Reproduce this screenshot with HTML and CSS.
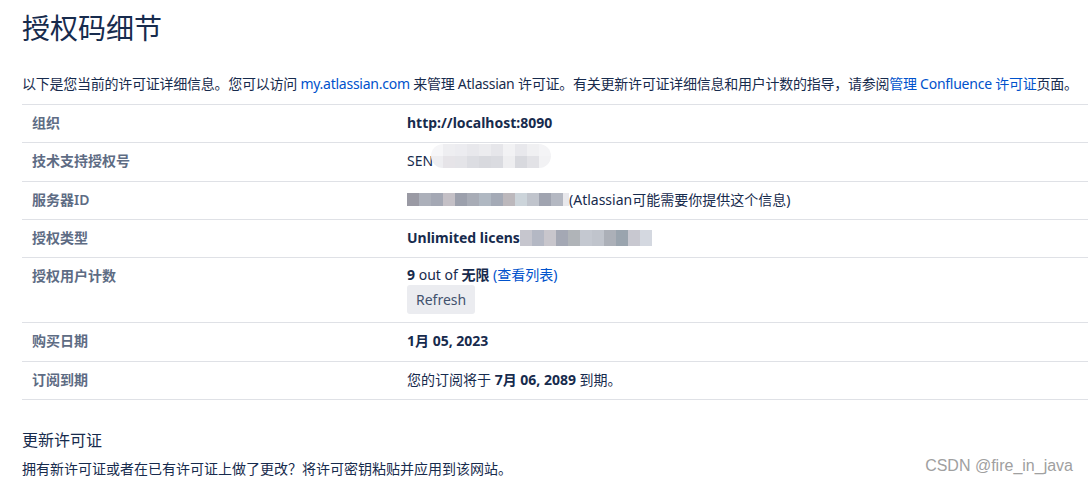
FILE: index.html
```html
<!DOCTYPE html>
<html lang="zh-CN">
<head>
<meta charset="utf-8">
<title>授权码细节</title>
<link rel="stylesheet" href="styles.css">
</head>
<body>
<div class="page">
  <h1 class="title">授权码细节</h1>
  <p class="intro">以下是您当前的许可证详细信息。您可以访问 <a href="#">my.atlassian.com</a> 来管理 Atlassian 许可证。有关更新许可证详细信息和用户计数的指导，请参阅<a href="#">管理 Confluence 许可证</a>页面。</p>
  <table class="details">
    <tr><th>组织</th><td><strong>http://localhost:8090</strong></td></tr>
    <tr class="loose"><th>技术支持授权号</th><td><span class="sen">SEN</span><span class="pill"><i></i><i></i><i></i><i></i><i></i><i></i><i></i><i></i><i></i><i></i><i></i><i></i><i></i><i></i><i></i><i></i><i></i><i></i><i></i><i></i></span></td></tr>
    <tr><th>服务器ID</th><td><span class="blocks sid"><i></i><i></i><i></i><i></i><i></i><i></i><i></i><i></i><i></i><i></i><i></i><i></i><i></i><i></i></span>(Atlassian可能需要你提供这个信息)</td></tr>
    <tr><th>授权类型</th><td><strong>Unlimited licens</strong><span class="blocks lic"><i></i><i></i><i></i><i></i><i></i><i></i><i></i><i></i><i></i><i></i><i></i></span></td></tr>
    <tr class="tall"><th>授权用户计数</th><td><div><strong>9</strong> out of <strong>无限</strong> <a href="#">(查看列表)</a></div><button class="btn" type="button">Refresh</button></td></tr>
    <tr class="loose"><th>购买日期</th><td><strong>1月 05, 2023</strong></td></tr>
    <tr><th>订阅到期</th><td>您的订阅将于 <strong>7月 06, 2089</strong> 到期。</td></tr>
  </table>
  <h2 class="sub">更新许可证</h2>
  <p class="note">拥有新许可证或者在已有许可证上做了更改？将许可密钥粘贴并应用到该网站。</p>
</div>
<div class="watermark">CSDN @fire_in_java</div>
</body>
</html>
```
FILE: styles.css
```css
html, body {
  margin: 0;
  padding: 0;
  background: #fff;
}
body {
  font-family: "Segoe UI", "Noto Sans", "Noto Sans CJK SC", sans-serif;
  font-size: 14px;
  line-height: 20px;
  color: #172b4d;
  overflow: hidden;
  width: 1088px;
  height: 485px;
  position: relative;
}
.page {
  padding: 12px 0 0 22px;
}
.title {
  margin: 0;
  font-size: 28px;
  line-height: 32px;
  font-weight: 400;
  color: #172b4d;
}
.intro {
  margin: 30px 0 10px;
  white-space: nowrap;
  letter-spacing: -0.25px;
}
a {
  color: #0052cc;
  text-decoration: none;
}
.details {
  border-collapse: collapse;
  width: 1066px;
  border-top: 1px solid #dfe1e6;
}
.details tr {
  border-bottom: 1px solid #dfe1e6;
}
.details th {
  text-align: left;
  font-weight: 600;
  color: #5e6c84;
  width: 355px;
  padding: 8px 10px 9px;
  vertical-align: top;
}
.details td {
  padding: 8px 10px 9px;
  vertical-align: top;
  white-space: nowrap;
}
.details tr.loose td {
  padding-bottom: 10px;
}
.details tr.tall td {
  padding-top: 7px;
  padding-bottom: 8px;
}
strong {
  font-weight: 700;
}
.btn {
  display: block;
  margin: 0;
  height: 29px;
  padding: 0 9px;
  border: 0;
  border-radius: 3px;
  background: #ebecf0;
  color: #42526e;
  font: inherit;
  line-height: 29px;
}
.sen {
  vertical-align: top;
}
.pill {
  display: inline-grid;
  grid-template-columns: repeat(10, 12px);
  grid-template-rows: 12px 12px;
  vertical-align: top;
  margin: -7px 0 0 -2px;
  border-radius: 12px;
  overflow: hidden;
}
.pill i:nth-child(1) { background: #f6f6f8; }
.pill i:nth-child(2) { background: #eeeef1; }
.pill i:nth-child(3) { background: #ececf0; }
.pill i:nth-child(4) { background: #e8e8ec; }
.pill i:nth-child(5) { background: #ececef; }
.pill i:nth-child(6) { background: #e6e6ea; }
.pill i:nth-child(7) { background: #f2f2f4; }
.pill i:nth-child(8) { background: #e8e8ec; }
.pill i:nth-child(9) { background: #f0f0f2; }
.pill i:nth-child(10) { background: #f4f4f6; }
.pill i:nth-child(11) { background: #eeeef1; }
.pill i:nth-child(12) { background: #e6e4e8; }
.pill i:nth-child(13) { background: #e4e4e8; }
.pill i:nth-child(14) { background: #dcdde2; }
.pill i:nth-child(15) { background: #d8d9de; }
.pill i:nth-child(16) { background: #dadbe0; }
.pill i:nth-child(17) { background: #eeeef0; }
.pill i:nth-child(18) { background: #d8d9de; }
.pill i:nth-child(19) { background: #e2e2e6; }
.pill i:nth-child(20) { background: #f2f2f4; }
.blocks {
  display: inline-flex;
  vertical-align: top;
}
.blocks i {
  display: block;
  width: 12px;
}
.sid {
  margin-top: 3px;
}
.sid i { height: 13px; }
.sid i:nth-child(1) { background: #9a9aa4; }
.sid i:nth-child(2) { background: #acb0ba; }
.sid i:nth-child(3) { background: #a4a8b4; }
.sid i:nth-child(4) { background: #c4c0c6; }
.sid i:nth-child(5) { background: #9ca0ac; }
.sid i:nth-child(6) { background: #a8acb6; }
.sid i:nth-child(7) { background: #b0b8c2; }
.sid i:nth-child(8) { background: #a4aab6; }
.sid i:nth-child(9) { background: #bcb8bc; }
.sid i:nth-child(10) { background: #ccd4da; }
.sid i:nth-child(11) { background: #c0c4cc; }
.sid i:nth-child(12) { background: #a0a4b0; }
.sid i:nth-child(13) { background: #b4b8c2; }
.sid i:nth-child(14) { background: #e8e8ec; width: 6px; }
.lic {
  margin-top: 2px;
}
.lic i { height: 16px; }
.lic i:nth-child(1) { background: #c6c6ce; }
.lic i:nth-child(2) { background: #b4b8c4; }
.lic i:nth-child(3) { background: #c8c6cc; }
.lic i:nth-child(4) { background: #a4a8b4; }
.lic i:nth-child(5) { background: #b0b4b8; }
.lic i:nth-child(6) { background: #c4c8d0; }
.lic i:nth-child(7) { background: #c0c4cc; }
.lic i:nth-child(8) { background: #acb0b8; }
.lic i:nth-child(9) { background: #9aa4ae; }
.lic i:nth-child(10) { background: #c8c8d0; }
.lic i:nth-child(11) { background: #d4d8e0; }
.sub {
  margin: 30px 0 0;
  font-size: 16px;
  line-height: 20px;
  font-weight: 400;
  color: #172b4d;
}
.note {
  margin: 9px 0 0;
}
.watermark {
  position: absolute;
  right: 15px;
  bottom: 9px;
  font-family: "Liberation Sans", Arial, sans-serif;
  font-size: 16px;
  line-height: 20px;
  color: #a0a0a0;
  text-shadow: 0 0 1px #fff;
}
```
